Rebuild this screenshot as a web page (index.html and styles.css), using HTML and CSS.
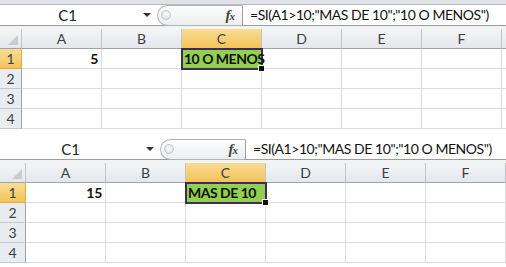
FILE: index.html
```html
<!DOCTYPE html>
<html lang="es">

<head>
  <meta charset="UTF-8">
  <title>SI</title>
  <link rel="stylesheet" href="styles.css">
</head>

<body>
  <div class="sheet first">
    <div class="ribbon-edge"></div>
    <div class="fbar">
      <div class="namebox">C1</div>
      <div class="drop"></div>
      <div class="pill">
        <span class="grip"></span>
        <span class="fx"><i>f</i><i class="x">x</i></span>
      </div>
      <div class="formula">=SI(A1&gt;10;"MAS DE 10";"10 O MENOS")</div>
    </div>
    <div class="band"></div>
    <div class="grid">
      <div class="hd corner"><span class="tri"></span></div>
      <div class="hd">A</div>
      <div class="hd">B</div>
      <div class="hd sel">C</div>
      <div class="hd">D</div>
      <div class="hd">E</div>
      <div class="hd">F</div>
      <div class="hd"></div>

      <div class="rh sel">1</div>
      <div class="c num">5</div>
      <div class="c"></div>
      <div class="c active"><span>10 O MENOS</span></div>
      <div class="c"></div>
      <div class="c"></div>
      <div class="c"></div>
      <div class="c"></div>

      <div class="rh">2</div>
      <div class="c"></div><div class="c"></div><div class="c"></div><div class="c"></div><div class="c"></div><div class="c"></div><div class="c"></div>
      <div class="rh">3</div>
      <div class="c"></div><div class="c"></div><div class="c"></div><div class="c"></div><div class="c"></div><div class="c"></div><div class="c"></div>
      <div class="rh">4</div>
      <div class="c"></div><div class="c"></div><div class="c"></div><div class="c"></div><div class="c"></div><div class="c"></div><div class="c"></div>
    </div>
  </div>

  <div class="sheet second">
    <div class="fbar">
      <div class="namebox">C1</div>
      <div class="drop"></div>
      <div class="pill">
        <span class="grip"></span>
        <span class="fx"><i>f</i><i class="x">x</i></span>
      </div>
      <div class="formula">=SI(A1&gt;10;"MAS DE 10";"10 O MENOS")</div>
    </div>
    <div class="band"></div>
    <div class="grid">
      <div class="hd corner"><span class="tri"></span></div>
      <div class="hd">A</div>
      <div class="hd">B</div>
      <div class="hd sel">C</div>
      <div class="hd">D</div>
      <div class="hd">E</div>
      <div class="hd">F</div>
      <div class="hd"></div>

      <div class="rh sel">1</div>
      <div class="c num">15</div>
      <div class="c"></div>
      <div class="c active"><span>MAS DE 10</span></div>
      <div class="c"></div>
      <div class="c"></div>
      <div class="c"></div>
      <div class="c"></div>

      <div class="rh">2</div>
      <div class="c"></div><div class="c"></div><div class="c"></div><div class="c"></div><div class="c"></div><div class="c"></div><div class="c"></div>
      <div class="rh">3</div>
      <div class="c"></div><div class="c"></div><div class="c"></div><div class="c"></div><div class="c"></div><div class="c"></div><div class="c"></div>
      <div class="rh">4</div>
      <div class="c"></div><div class="c"></div><div class="c"></div><div class="c"></div><div class="c"></div><div class="c"></div><div class="c"></div>
    </div>
  </div>
</body>

</html>
```

FILE: styles.css
```css
* {
  margin: 0;
  padding: 0;
  box-sizing: border-box;
}

body {
  width: 506px;
  height: 267px;
  overflow: hidden;
  background: #fff;
  font-family: Lato, "Open Sans", sans-serif;
  color: #222;
}

.sheet {
  width: 506px;
  overflow: hidden;
}

.second {
  margin-top: 10px;
}

.ribbon-edge {
  height: 5px;
  background: #dfe3e8;
  border-bottom: 1px solid #b8bcc2;
}

.fbar {
  display: flex;
  align-items: center;
  height: 21px;
  border-bottom: 1px solid #9c9c9c;
  background: #fff;
}

.second .fbar {
  padding-left: 3px;
}

.fbar > div {
  flex-shrink: 0;
}

.namebox {
  width: 135px;
  text-align: center;
  font-size: 15px;
  line-height: 20px;
}

.drop {
  width: 0;
  height: 0;
  border-left: 4px solid transparent;
  border-right: 4px solid transparent;
  border-top: 4px solid #333;
  margin-left: 8px;
}

.pill {
  display: flex;
  align-items: center;
  justify-content: space-between;
  width: 86px;
  height: 21px;
  margin-left: 6px;
  border: 1px solid #b3b3b3;
  border-right: 1px solid #9c9c9c;
  border-radius: 11px 0 0 11px;
  background: linear-gradient(#fdfdfd, #eceef0);
  padding: 0 8px 0 3px;
}

.grip {
  width: 10px;
  height: 10px;
  border-radius: 50%;
  background: radial-gradient(circle at 50% 40%, #fff, #d4d7db);
  border: 1px solid #c4c7cb;
}

.fx {
  font-family: "Liberation Serif", serif;
  font-size: 15px;
  font-weight: bold;
  color: #444;
  letter-spacing: -1px;
}

.fx .x {
  font-size: 11px;
}

.fbar > .formula {
  flex: 1 1 auto;
  min-width: 0;
  padding-left: 7px;
  font-size: 14px;
  letter-spacing: -0.45px;
  line-height: 20px;
  white-space: nowrap;
  color: #111;
}

.band {
  height: 3px;
  background: #f2f3f5;
}

.grid {
  display: grid;
  grid-template-columns: 22px repeat(7, 80px);
  grid-auto-rows: 20px;
}

.second .grid {
  grid-template-columns: 26px repeat(7, 80px);
}

.hd,
.rh {
  display: flex;
  align-items: center;
  justify-content: center;
  font-size: 14px;
  color: #3a3f46;
  background: linear-gradient(#f4f5f7, #e4e7eb);
  border-right: 1px solid #c0c4ca;
  border-bottom: 1px solid #9fa4ab;
}

.rh {
  background: #e9ecf0;
  border-right: 1px solid #9fa4ab;
  border-bottom: 1px solid #c5c9ce;
}

.hd.sel,
.rh.sel {
  background: linear-gradient(#f9dc94, #f3c35a);
  border-bottom-color: #e6a83a;
}

.rh.sel {
  border-right-color: #e6a83a;
}

.corner {
  position: relative;
}

.tri {
  position: absolute;
  right: 3px;
  bottom: 3px;
  width: 0;
  height: 0;
  border-left: 10px solid transparent;
  border-bottom: 10px solid #c8ccd2;
}

.c {
  border-right: 1px solid #dadcdf;
  border-bottom: 1px solid #dadcdf;
  font-size: 14px;
  font-weight: bold;
  letter-spacing: -0.3px;
  line-height: 19px;
  color: #111;
  white-space: nowrap;
}

.c.num {
  text-align: right;
  padding-right: 3px;
}

.c.active {
  position: relative;
}

.c.active span {
  position: absolute;
  left: -1px;
  top: -1px;
  width: 82px;
  height: 22px;
  padding-left: 1px;
  background: #92d050;
  border: 2px solid #3f2a5c;
  line-height: 17px;
  letter-spacing: -0.5px;
}

.c.active::after {
  content: "";
  position: absolute;
  right: -4px;
  bottom: -4px;
  width: 5px;
  height: 5px;
  background: #111;
  border: 1px solid #fff;
  z-index: 2;
}
```
